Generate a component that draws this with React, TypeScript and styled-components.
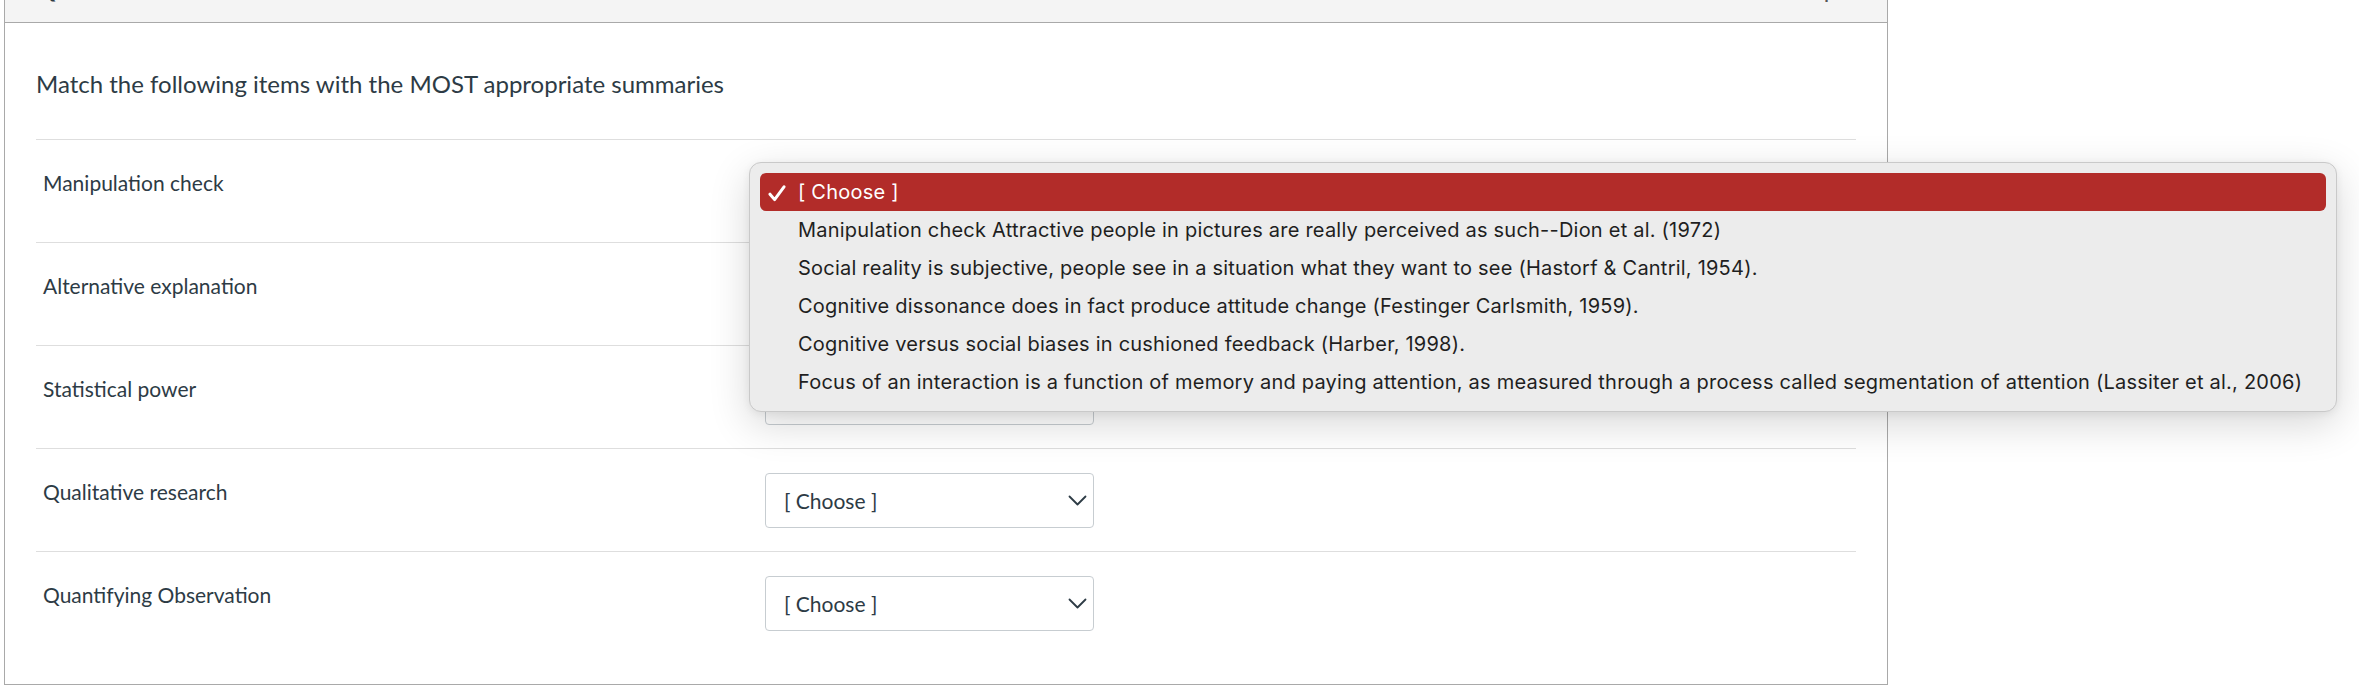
import React from 'react';
import styled, { createGlobalStyle } from 'styled-components';

const GlobalStyle = createGlobalStyle`
	html, body {
		margin: 0;
		padding: 0;
		background: #ffffff;
		overflow: hidden;
	}
	body {
		font-family: Lato, 'Open Sans', sans-serif;
		color: #2d3b45;
	}
`;

const Page = styled.div`
	padding-left: 4px;
	width: 1884px;
`;

const Card = styled.section`
	margin-top: -40px;
	border: 1px solid #a9a9a9;
	background: #ffffff;
`;

const Header = styled.header`
	box-sizing: border-box;
	height: 62px;
	padding: 16px 31px 0;
	display: flex;
	justify-content: space-between;
	align-items: flex-start;
	background: #f4f4f4;
	border-bottom: 1px solid #a9a9a9;
	font-size: 24px;
	line-height: 24px;
	font-weight: 700;
	color: #2d3b45;
`;

const Points = styled.span`
	font-weight: 400;
	color: #555;
`;

const Body = styled.div`
	padding: 0 31px 30px;
`;

const Prompt = styled.p`
	margin: 0;
	padding: 44px 0 38px;
	font-size: 24px;
	line-height: 34px;
	color: #2d3b45;
`;

const Row = styled.div`
	box-sizing: border-box;
	height: 103px;
	border-top: 1px solid #dedede;
	display: grid;
	grid-template-columns: 729px 329px;
	align-items: start;
`;

const Label = styled.div`
	padding: 28px 0 0 7px;
	font-size: 21px;
	line-height: 29px;
	color: #2d3b45;
`;

const SelectCell = styled.div`
	position: relative;
	padding-top: 24px;
`;

const SelectBox = styled.div`
	box-sizing: border-box;
	height: 55px;
	border: 1px solid #c7cdd1;
	border-radius: 4px;
	background: #ffffff;
	display: flex;
	align-items: center;
	justify-content: space-between;
	padding: 0 6px 0 18px;
	font-size: 21px;
	color: #2d3b45;
`;

const Chevron = () => (
	<svg width="19" height="11" viewBox="0 0 19 11" fill="none">
		<path d="M1.5 1.5 L9.5 9.5 L17.5 1.5" stroke="#2d3b45" strokeWidth="1.8" strokeLinecap="round" strokeLinejoin="round" />
	</svg>
);

const Popup = styled.div`
	position: absolute;
	left: -16px;
	top: 22px;
	z-index: 10;
	box-sizing: border-box;
	width: 1588px;
	padding: 10px;
	background: #ececec;
	border: 1px solid #c9c9c9;
	border-radius: 12px;
	box-shadow: 0 12px 40px rgba(0, 0, 0, 0.16), 0 2px 8px rgba(0, 0, 0, 0.06);
	font-family: Inter, 'Noto Sans', sans-serif;
`;

const Option = styled.div<{ $selected?: boolean }>`
	height: 38px;
	display: flex;
	align-items: center;
	padding-left: 38px;
	position: relative;
	border-radius: 6px;
	font-size: 20px;
	letter-spacing: 0.22px;
	white-space: nowrap;
	color: ${({ $selected }) => ($selected ? '#ffffff' : '#1f1f1f')};
	background: ${({ $selected }) => ($selected ? '#b22c29' : 'transparent')};
`;

const Check = styled.svg`
	position: absolute;
	left: 8px;
	top: 12px;
`;

const options = [
	'Manipulation check Attractive people in pictures are really perceived as such--Dion et al. (1972)',
	'Social reality is subjective, people see in a situation what they want to see (Hastorf & Cantril, 1954).',
	'Cognitive dissonance does in fact produce attitude change (Festinger Carlsmith, 1959).',
	'Cognitive versus social biases in cushioned feedback (Harber, 1998).',
	'Focus of an interaction is a function of memory and paying attention, as measured through a process called segmentation of attention (Lassiter et al., 2006)',
];

const items = [
	'Manipulation check',
	'Alternative explanation',
	'Statistical power',
	'Qualitative research',
	'Quantifying Observation',
];

function ChoicePopup() {
	return (
		<Popup>
			<Option $selected>
				<Check width="18" height="17" viewBox="0 0 18 17" fill="none">
					<path d="M2 9.2 L6.6 14.6 L16 1.8" stroke="#ffffff" strokeWidth="3" strokeLinecap="round" strokeLinejoin="round" />
				</Check>
				[ Choose ]
			</Option>
			{options.map((text) => (
				<Option key={text}>{text}</Option>
			))}
		</Popup>
	);
}

export default function App() {
	return (
		<>
			<GlobalStyle />
			<Page>
				<Card>
					<Header>
						<span>Question 1</span>
						<Points>1 pts</Points>
					</Header>
					<Body>
						<Prompt>Match the following items with the MOST appropriate summaries</Prompt>
						{items.map((item, i) => (
							<Row key={item}>
								<Label>{item}</Label>
								<SelectCell>
									<SelectBox>
										<span>[ Choose ]</span>
										<Chevron />
									</SelectBox>
									{i === 0 ? <ChoicePopup /> : null}
								</SelectCell>
							</Row>
						))}
					</Body>
				</Card>
			</Page>
		</>
	);
}
